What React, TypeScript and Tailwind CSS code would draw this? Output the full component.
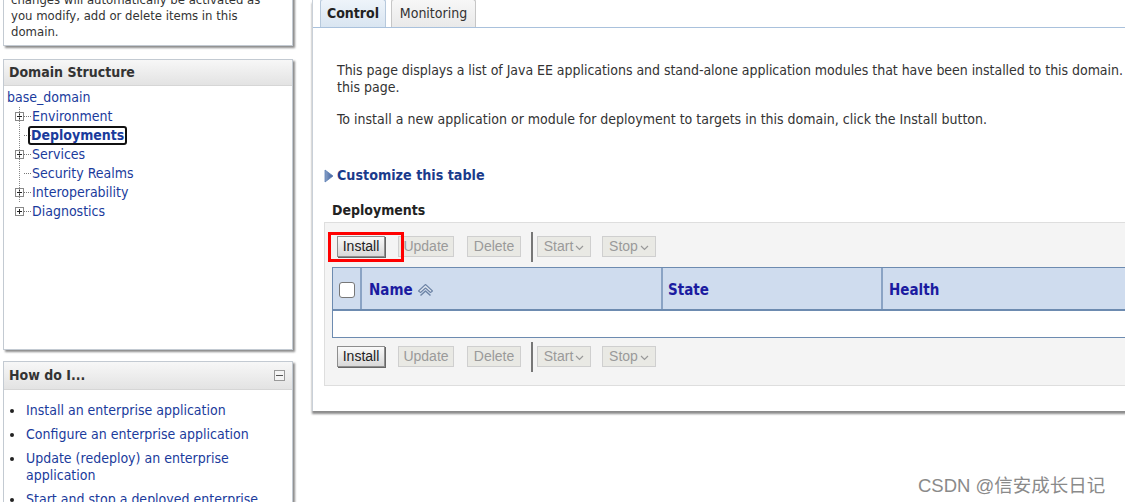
import React from 'react';

const tahoma = "font-['DejaVu_Sans_Condensed','Liberation_Sans',sans-serif]";

const PlusBox = () => (
  <span className="inline-flex items-center justify-center w-[9px] h-[9px] border border-[#888] bg-white shrink-0">
    <svg width="7" height="7" viewBox="0 0 7 7">
      <path d="M1 3.5h5M3.5 1v5" stroke="#222" strokeWidth="1" />
    </svg>
  </span>
);

const TreeRow = ({ label, plus, active }: { label: string; plus?: boolean; active?: boolean }) => (
  <div className="flex items-center h-[19px] pl-[11px]">
    {plus ? <PlusBox /> : <span className="w-[9px] h-[9px] shrink-0" />}
    <span className="w-[7px] border-t border-dotted border-[#777] shrink-0 mr-[1px]" />
    {active ? (
      <span className="px-[1px] border-2 border-[#111] rounded-[3px] font-bold text-[#1a3b9c] leading-[15px] -ml-[4px]">{label}</span>
    ) : (
      <span className="text-[#1a3b9c]">{label}</span>
    )}
  </div>
);

const Btn = ({ label, enabled, menu, w }: { label: string; enabled?: boolean; menu?: boolean; w: string }) => (
  <div
    className={
      'h-[21px] flex items-center justify-center border text-[14px] font-[Liberation_Sans,Arial,sans-serif] ' +
      w +
      ' ' +
      (enabled
        ? 'border-[#8e8e8e] bg-gradient-to-b from-[#fafafa] to-[#d9d9d9] text-[#222] shadow-[1px_1px_0_#666]'
        : 'border-[#cfcfcf] bg-[#e9e9e4] text-[#9a9a9a]')
    }
  >
    {label}
    {menu && (
      <svg width="9" height="6" viewBox="0 0 9 6" className="ml-[2px] mt-[2px]">
        <path d="M1 1l3.5 3.5L8 1" stroke="#999" strokeWidth="1.2" fill="none" />
      </svg>
    )}
  </div>
);

const Toolbar = ({ highlight }: { highlight?: boolean }) => (
  <div className="relative flex items-center h-[21px] pl-[12px]">
    <Btn label="Install" enabled w="w-[48px]" />
    <div className="w-[13px]" />
    <Btn label="Update" w="w-[56px]" />
    <div className="w-[13px]" />
    <Btn label="Delete" w="w-[54px]" />
    <div className="w-[10px]" />
    <div className="w-[2px] h-[30px] bg-[#777]" />
    <div className="w-[4px]" />
    <Btn label="Start" menu w="w-[54px]" />
    <div className="w-[11px]" />
    <Btn label="Stop" menu w="w-[54px]" />
    {highlight && (
      <div className="absolute left-[3px] top-[-4px] w-[76px] h-[30px] border-[3px] border-[#ff0000]" />
    )}
  </div>
);

const SortIcon = () => (
  <svg width="17" height="14" viewBox="0 0 17 14" className="ml-[4px]">
    <path d="M1.5 8L8.5 1.5 15.5 8 13.5 9.5 8.5 5 3.5 9.5z" fill="#e3e9f2" stroke="#6f86a8" strokeWidth="1.1" strokeLinejoin="round" />
    <path d="M3.5 12.5L8.5 8l5 4.5" fill="none" stroke="#6f86a8" strokeWidth="1.5" strokeLinejoin="round" />
  </svg>
);

export default function App() {
  const howItems = [
    ['Install an enterprise application'],
    ['Configure an enterprise application'],
    ['Update (redeploy) an enterprise', 'application'],
    ['Start and stop a deployed enterprise', 'application'],
  ];

  return (
    <div className={'relative w-[1125px] h-[502px] overflow-hidden bg-white flex text-[13px] text-[#333] ' + tahoma}>
      {/* Left column */}
      <div className="w-[296px] shrink-0 flex flex-col pl-[3px]">
        <div className="shrink-0 -mt-[9px] w-[290px] bg-white border border-[#c3cad2] shadow-[2px_2px_2px_#8c8c8c] px-[7px] pb-[5px] leading-[16px]">
          <div>changes will automatically be activated as</div>
          <div>you modify, add or delete items in this</div>
          <div>domain.</div>
        </div>

        <div className="shrink-0 mt-[13px] w-[290px] h-[291px] bg-white border border-[#c3cad2] shadow-[2px_2px_2px_#8c8c8c]">
          <div className="h-[26px] flex items-center px-[5px] bg-gradient-to-b from-[#f7f7f7] to-[#e3e3e3] border-b border-[#d6d6d6] text-[14px] font-bold text-[#333]">
            Domain Structure
          </div>
          <div className="pt-[2px] text-[14px]">
            <div className="h-[19px] flex items-center pl-[3px] text-[#1a3b9c]">base_domain</div>
            <div className="relative">
              <div className="absolute left-[15px] top-0 h-[95px] border-l border-dotted border-[#888]" />
              <TreeRow label="Environment" plus />
              <TreeRow label="Deployments" active />
              <TreeRow label="Services" plus />
              <TreeRow label="Security Realms" />
              <TreeRow label="Interoperability" plus />
              <TreeRow label="Diagnostics" plus />
            </div>
          </div>
        </div>

        <div className="shrink-0 mt-[11px] w-[290px] h-[160px] bg-white border border-[#c3cad2] shadow-[2px_2px_2px_#8c8c8c]">
          <div className="h-[28px] flex items-center justify-between px-[5px] bg-gradient-to-b from-[#f7f7f7] to-[#e3e3e3] border-b border-[#d6d6d6] text-[14px] font-bold text-[#333]">
            <span>How do I...</span>
            <span className="w-[11px] h-[11px] border border-[#999] bg-[#f4f4f4] flex items-center justify-center mr-[2px]">
              <span className="w-[7px] h-[1px] bg-[#555]" />
            </span>
          </div>
          <ul className="pt-[12px] text-[14px] leading-[17px]">
            {howItems.map((lines, i) => (
              <li key={i} className="flex mb-[7px]">
                <span className="w-[4px] h-[4px] rounded-full bg-[#222] ml-[6px] mt-[7px] shrink-0" />
                <span className="ml-[12px] text-[#1a3b9c]">
                  {lines.map((l) => (
                    <div key={l}>{l}</div>
                  ))}
                </span>
              </li>
            ))}
          </ul>
        </div>
      </div>

      {/* Main panel */}
      <div className="ml-[16px] w-[1000px] shrink-0 h-[411px] border-l border-[#c9d0d8] shadow-[0_3px_2px_#8c8c8c] bg-white flex flex-col">
        <div className="flex items-end h-[28px] pl-[7px] border-b border-[#a9c1dc]">
          <div className="h-[28px] w-[66px] flex items-center justify-center rounded-t-[3px] border border-b-0 border-[#b7c9dc] bg-gradient-to-b from-[#eef4fa] to-[#d9e5f1] font-bold text-[14px] text-[#222]">
            Control
          </div>
          <div className="ml-[5px] h-[28px] w-[85px] flex items-center justify-center rounded-t-[3px] border border-b-0 border-[#c6c6c6] bg-gradient-to-b from-[#f7f7f7] to-[#e9e9e9] text-[14px] text-[#333]">
            Monitoring
          </div>
        </div>

        <div className="pl-[24px] pt-[34px] text-[14px] leading-[17px] text-[#333]">
          <div className="whitespace-nowrap tracking-[-0.04px]">
            This page displays a list of Java EE applications and stand-alone application modules that have been installed to this domain. Installed applications and modules can be started, stopped, updated (redeployed), or deleted from the domain by first selecting the application name and using the controls on
          </div>
          <div className="whitespace-nowrap">this page.</div>
          <div className="mt-[15px] whitespace-nowrap">
            To install a new application or module for deployment to targets in this domain, click the Install button.
          </div>
        </div>

        <div className="flex items-center pl-[11px] mt-[39px] h-[17px]">
          <svg width="10" height="14" viewBox="0 0 10 14">
            <defs>
              <linearGradient id="tri" x1="0" y1="0" x2="1" y2="0">
                <stop offset="0" stopColor="#8aa2c8" />
                <stop offset="1" stopColor="#3d5f9e" />
              </linearGradient>
            </defs>
            <path d="M1 1L9 7L1 13Z" fill="url(#tri)" stroke="#5b7db4" strokeWidth="0.8" />
          </svg>
          <span className="ml-[3px] text-[14.2px] font-bold text-[#1a3b8c]">Customize this table</span>
        </div>

        <div className="pl-[19px] mt-[18px] text-[14px] font-bold text-[#222] h-[17px] leading-[17px]">Deployments</div>

        <div className="ml-[11px] mt-[3px] h-[164px] border border-[#dedede] bg-[#f4f4f4] pt-[13px]">
          <Toolbar highlight />
          <div className="mt-[10px] ml-[7px] border border-[#6d8bb0] bg-white">
            <div className="flex h-[43px] bg-[#cfdcee] border-b-2 border-[#6d8bb0] text-[15px] font-bold text-[#1b1ba0]">
              <div className="w-[29px] flex items-center justify-center border-r-2 border-[#8aa3c4] pt-[2px]">
                <span className="w-[16px] h-[16px] border border-[#777] rounded-[3px] bg-white" />
              </div>
              <div className="w-[301px] flex items-center pl-[7px] pt-[3px] border-r-2 border-[#8aa3c4]">
                Name <SortIcon />
              </div>
              <div className="w-[220px] flex items-center pl-[5px] pt-[3px] border-r-2 border-[#8aa3c4]">State</div>
              <div className="flex-1 flex items-center pl-[6px] pt-[3px]">Health</div>
            </div>
            <div className="h-[26px]" />
          </div>
          <div className="mt-[8px]">
            <Toolbar />
          </div>
        </div>
      </div>

      <div className="absolute left-[918px] top-[472px] text-[18.5px] text-[#8a8a8a] font-['Liberation_Sans','Noto_Sans_CJK_SC',sans-serif]">
        CSDN @信安成长日记
      </div>
    </div>
  );
}
